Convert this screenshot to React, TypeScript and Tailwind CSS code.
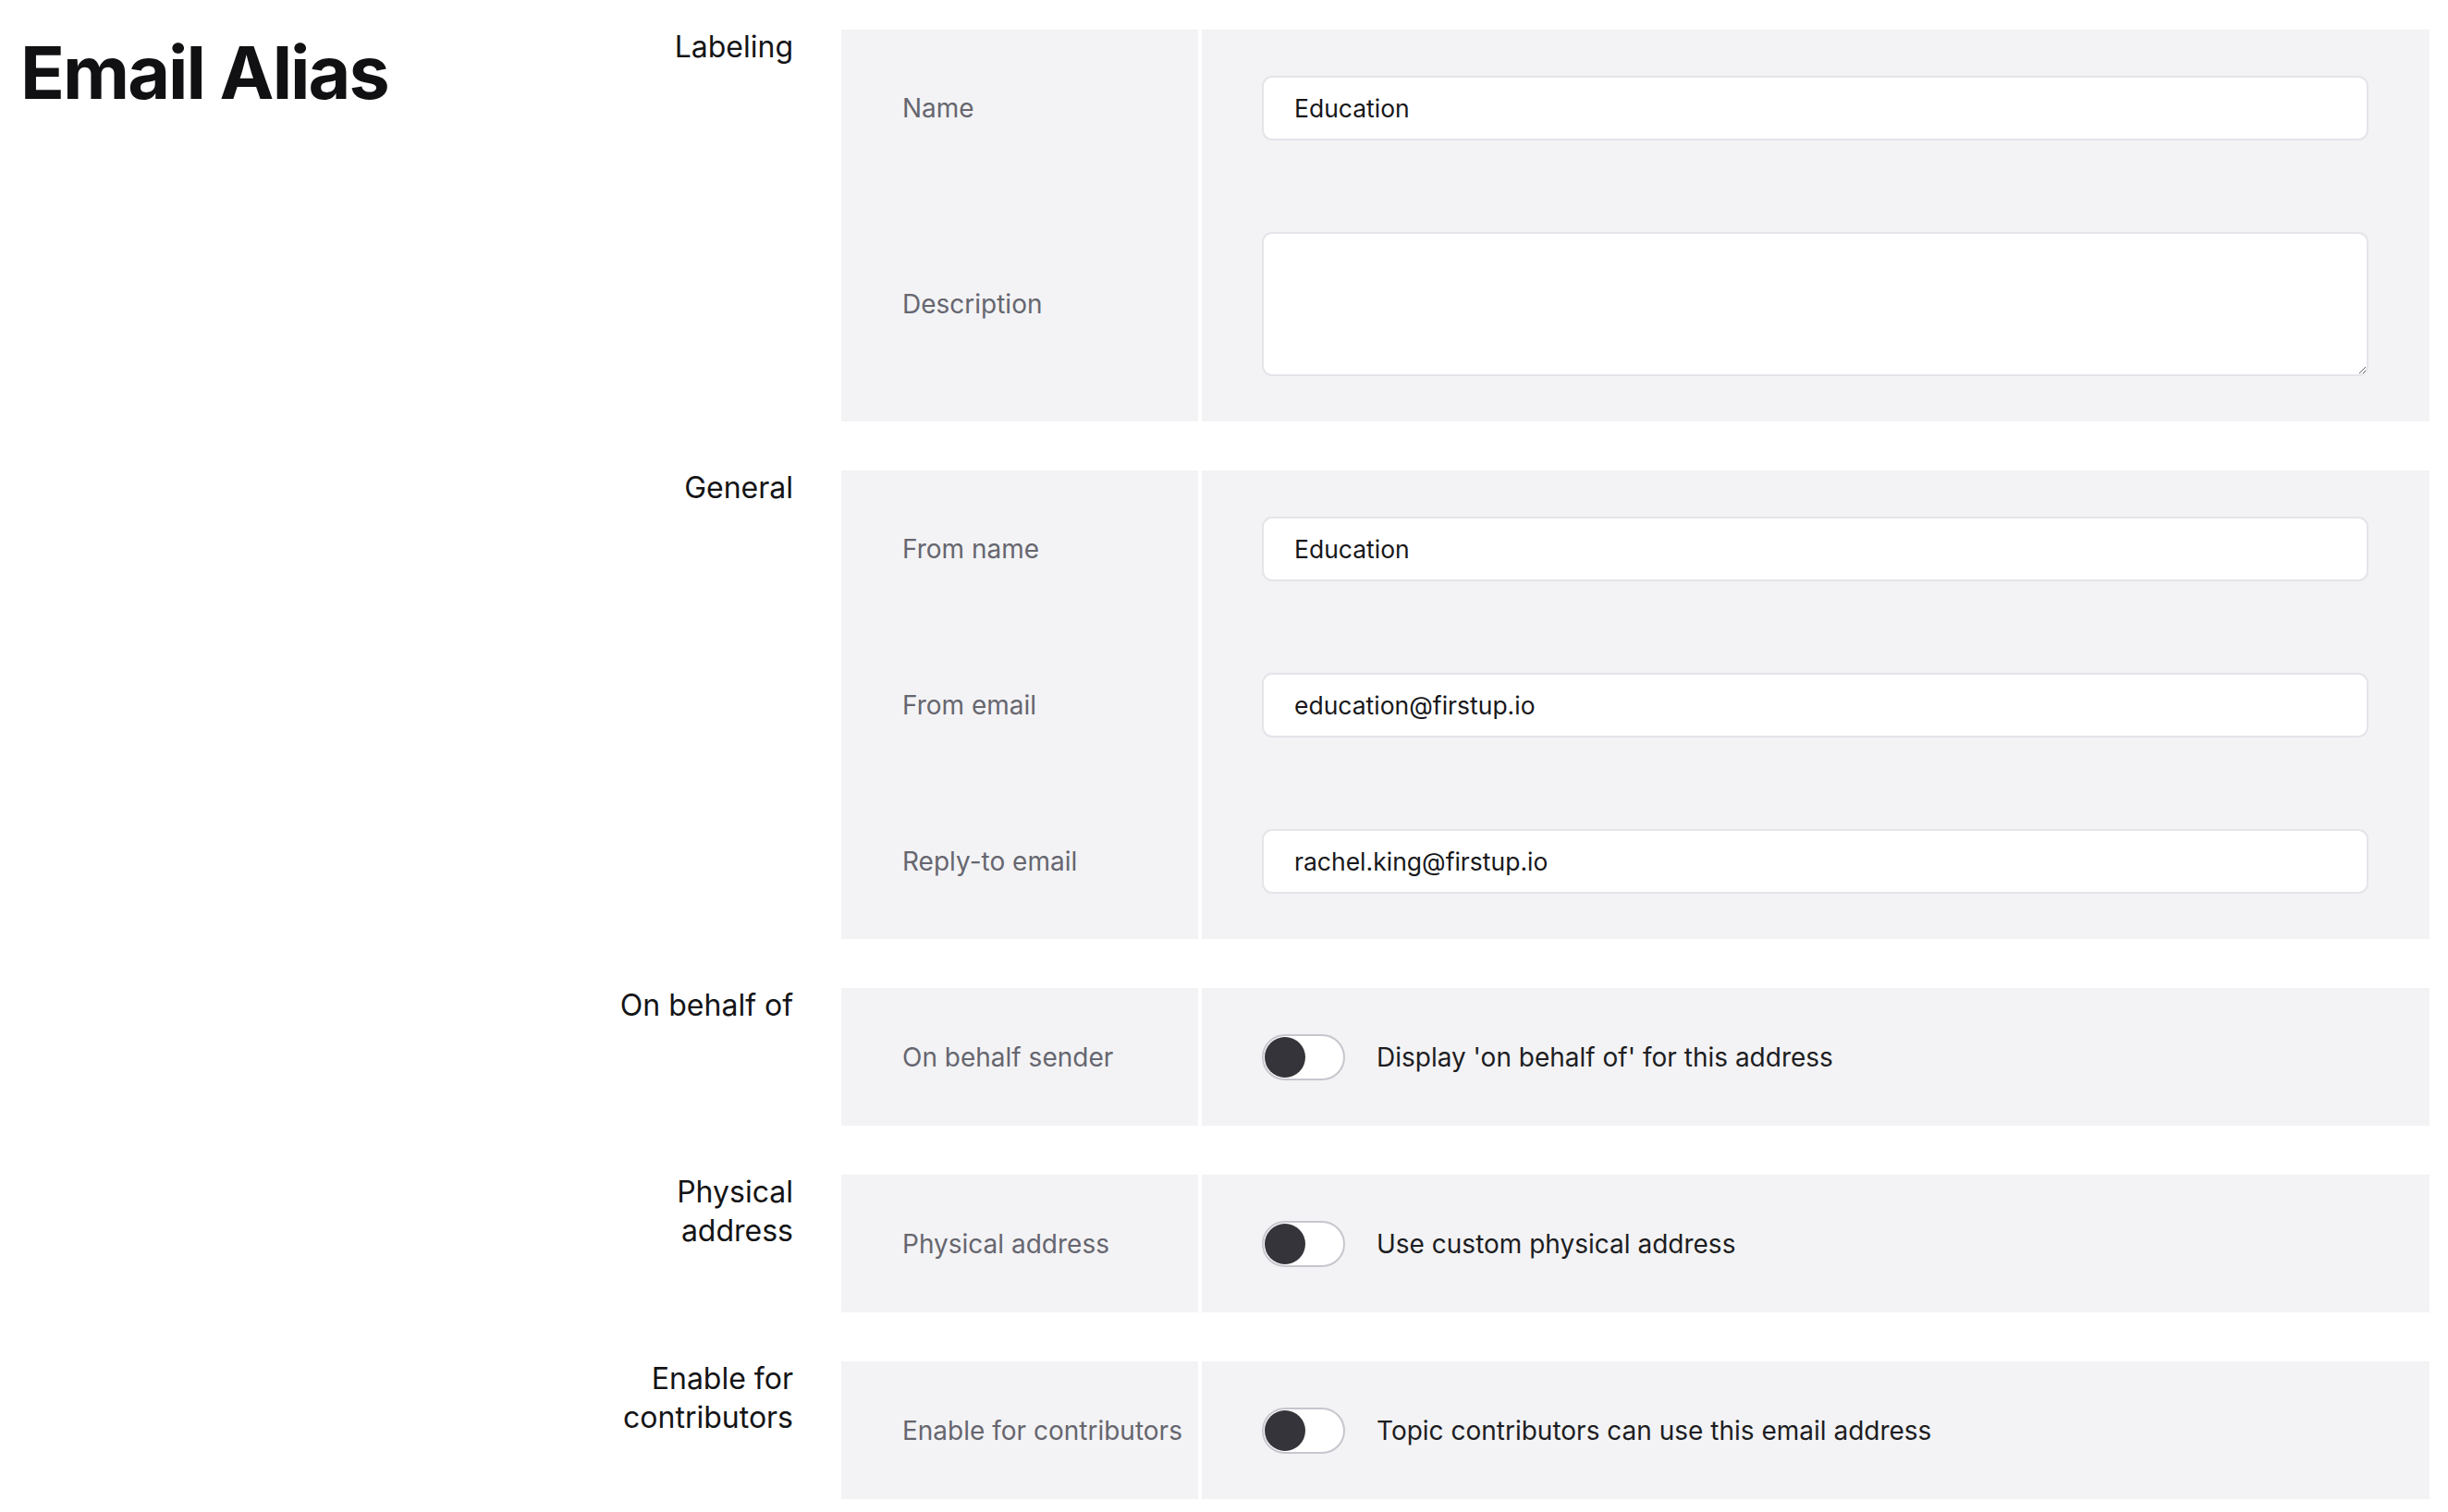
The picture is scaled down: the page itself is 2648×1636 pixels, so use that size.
import { useState } from "react";

const font = { fontFamily: "Inter, 'Noto Sans', sans-serif" };

function Toggle({ label }: { label: string }) {
  const [on, setOn] = useState(false);
  return (
    <div className="flex items-center gap-[34px]">
      <button
        onClick={() => setOn(!on)}
        className={`relative h-[50px] w-[90px] shrink-0 rounded-full border-2 border-[#c6c6ce] ${
          on ? "bg-[#34343a]" : "bg-white"
        }`}
      >
        <span
          className={`absolute top-[1px] h-[44px] w-[44px] rounded-full ${
            on ? "left-[41px] bg-white" : "left-[1px] bg-[#34343a]"
          }`}
        />
      </button>
      <span className="text-[28px] text-[#1d1d22]">{label}</span>
    </div>
  );
}

function TextInput({ value }: { value: string }) {
  const [v, setV] = useState(value);
  return (
    <input
      value={v}
      onChange={(e) => setV(e.target.value)}
      className="block h-[70px] w-full rounded-[11px] border-2 border-[#e4e4ea] bg-white px-[33px] text-[26.5px] text-[#17171a] outline-none"
    />
  );
}

interface Row {
  label: string;
  field: React.ReactNode;
}

function Section({ title, rows }: { title: string; rows: Row[] }) {
  return (
    <div className="flex items-start gap-[52px]">
      <div className="-mt-[2px] w-[218px] shrink-0 text-right text-[32px] leading-[42px] text-[#141416]">
        {title}
      </div>
      <div className="grid flex-1 grid-cols-[386px_1fr] gap-x-[4px]">
        {rows.map((row) => (
          <div key={row.label} className="contents">
            <div className="flex items-center whitespace-nowrap bg-[#f3f3f5] pl-[66px] pr-[8px] text-[28px] text-[#66666f]">
              {row.label}
            </div>
            <div className="bg-[#f3f3f5] py-[49.5px] pl-[65px] pr-[66px]">
              {row.field}
            </div>
          </div>
        ))}
      </div>
    </div>
  );
}

export default function App() {
  return (
    <div className="flex min-h-screen bg-white pt-[32px] pr-[20px]" style={font}>
      <div className="w-[640px] shrink-0 pl-[22px]">
        <h1 className="mt-[7px] text-[79px] font-bold leading-none tracking-[-0.025em] text-[#111113]">
          Email Alias
        </h1>
      </div>

      <div className="flex flex-1 flex-col gap-[53px]">
        <Section
          title="Labeling"
          rows={[
            { label: "Name", field: <TextInput value="Education" /> },
            {
              label: "Description",
              field: (
                <textarea className="block h-[156px] w-full rounded-[11px] border-2 border-[#e4e4ea] bg-white px-[33px] py-[16px] text-[26.5px] outline-none" />
              ),
            },
          ]}
        />

        <Section
          title="General"
          rows={[
            { label: "From name", field: <TextInput value="Education" /> },
            { label: "From email", field: <TextInput value="education@firstup.io" /> },
            { label: "Reply-to email", field: <TextInput value="rachel.king@firstup.io" /> },
          ]}
        />

        <Section
          title="On behalf of"
          rows={[
            {
              label: "On behalf sender",
              field: <Toggle label="Display 'on behalf of' for this address" />,
            },
          ]}
        />

        <Section
          title="Physical address"
          rows={[
            {
              label: "Physical address",
              field: <Toggle label="Use custom physical address" />,
            },
          ]}
        />

        <Section
          title="Enable for contributors"
          rows={[
            {
              label: "Enable for contributors",
              field: <Toggle label="Topic contributors can use this email address" />,
            },
          ]}
        />
      </div>
    </div>
  );
}
